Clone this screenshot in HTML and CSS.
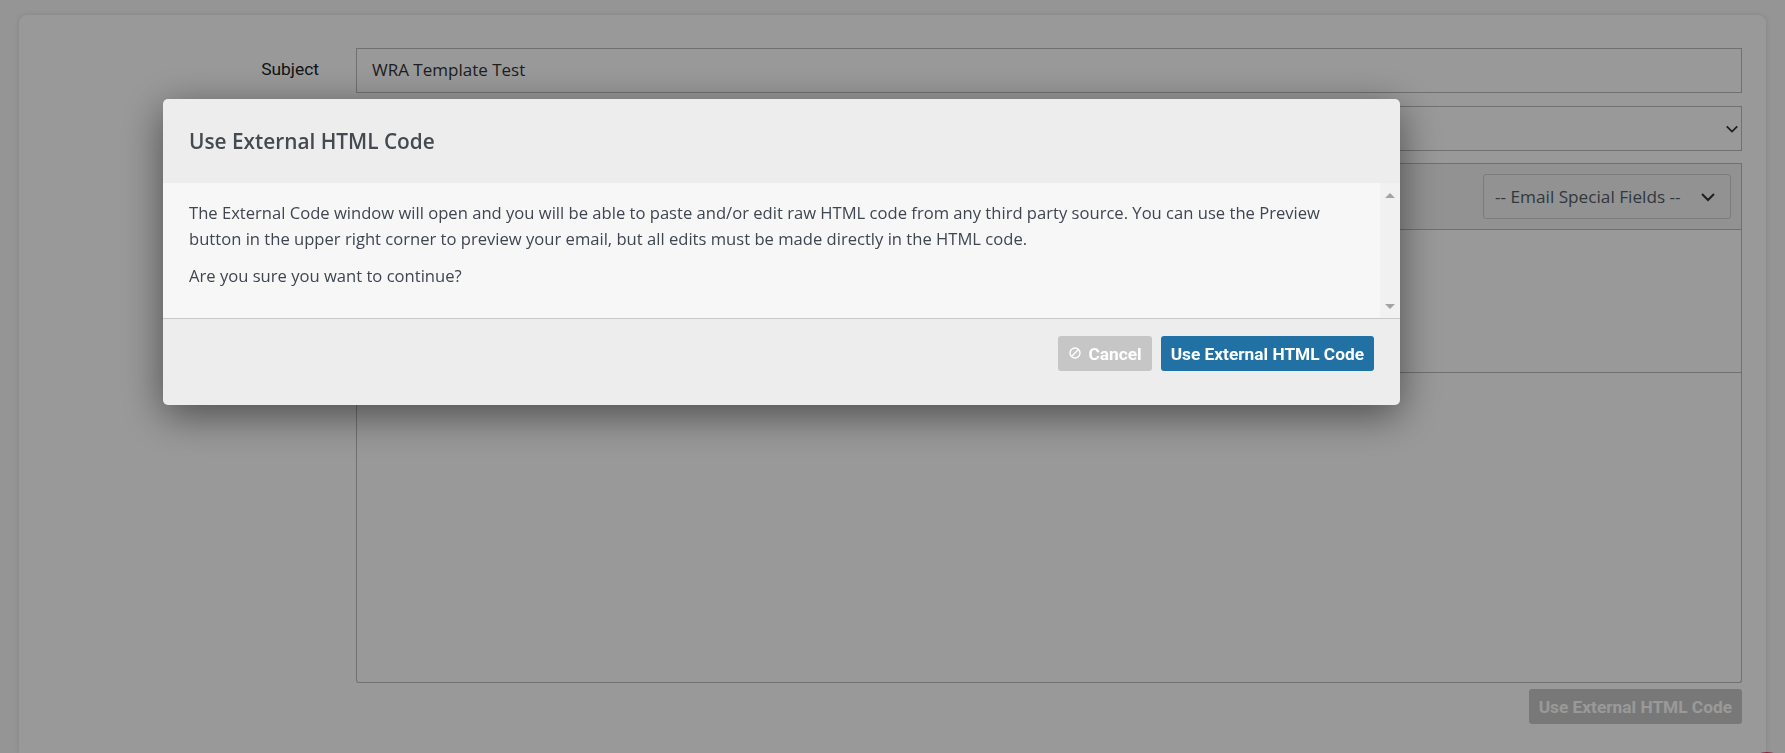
FILE: index.html
```html
<!DOCTYPE html>
<html lang="en">
<head>
    <meta charset="UTF-8">
    <title>Use External HTML Code</title>
    <link rel="stylesheet" href="styles.css">
</head>
<body>
    <!-- Page behind the dialog -->
    <div class="card">
        <div class="form-row form-row-first">
            <label class="form-label">Subject</label>
            <div class="form-input">WRA Template Test</div>
        </div>
        <div class="form-row">
            <span class="form-label"></span>
            <div class="form-select">
                <svg class="chevron chevron-small" viewBox="0 0 16 16"><path d="M2 5l6 6 6-6"/></svg>
            </div>
        </div>
        <div class="form-row">
            <span class="form-label"></span>
            <div class="editor">
                <div class="editor-toolbar">
                    <div class="fields-select">
                        <span>-- Email Special Fields --</span>
                        <svg class="chevron" viewBox="0 0 16 16"><path d="M2 5l6 6 6-6"/></svg>
                    </div>
                </div>
                <div class="editor-top"></div>
                <div class="editor-code"></div>
                <div class="editor-actions">
                    <button class="btn btn-primary" type="button">Use External HTML Code</button>
                </div>
            </div>
        </div>
    </div>
    <div class="corner-dot"></div>

    <!-- Dialog -->
    <div class="backdrop">
        <div class="modal">
            <div class="modal-header">Use External HTML Code</div>
            <div class="modal-body">
                <div class="modal-text">
                    <p>The External Code window will open and you will be able to paste and/or edit raw HTML code from any third party source. You can use the Preview button in the upper right corner to preview your email, but all edits must be made directly in the HTML code.</p>
                    <p>Are you sure you want to continue?</p>
                </div>
                <div class="scroll-rail">
                    <span class="arrow-up"></span>
                    <span class="arrow-down"></span>
                </div>
            </div>
            <div class="modal-footer">
                <button class="btn btn-cancel" type="button">
                    <svg class="cancel-icon" viewBox="0 0 14 14"><circle cx="7" cy="7" r="5"/><path d="M3.6 10.4l6.8-6.8"/></svg>
                    Cancel
                </button>
                <button class="btn btn-primary" type="button">Use External HTML Code</button>
            </div>
        </div>
    </div>
</body>
</html>
```

FILE: styles.css
```css
html, body {
    height: 100%;
}
body {
    margin: 0;
    overflow: hidden;
    background-color: #f8f8f8;
    font-family: "Open Sans", sans-serif;
    color: #444;
}

/* Page behind the dialog */
.card {
    margin: 15px 19px 0;
    height: 738px;
    padding: 33px 24px 0 0;
    background: #fff;
    border-radius: 8px 8px 0 0;
    box-shadow: 0 0 5px rgba(0, 0, 0, 0.12);
    box-sizing: border-box;
}
.form-row {
    display: flex;
    margin-bottom: 12px;
}
.form-row-first {
    margin-bottom: 13px;
}
.form-label {
    width: 300px;
    flex: none;
    padding-top: 11px;
    margin-right: 37px;
    text-align: right;
    font-family: Roboto, sans-serif;
    font-size: 17.4px;
    color: #222;
}
.form-input, .form-select {
    flex: 1;
    height: 45px;
    box-sizing: border-box;
    border: 1px solid #bbb;
    padding: 9px 15px;
    font-size: 17px;
    line-height: 23px;
    color: #333;
}
.form-select {
    display: flex;
    justify-content: flex-end;
    align-items: center;
    padding: 0 2px 0 0;
}
.chevron {
    width: 16px;
    height: 16px;
    fill: none;
    stroke: #333;
    stroke-width: 2;
}
.chevron-small {
    width: 14px;
    height: 14px;
}
.editor {
    flex: 1;
}
.editor-toolbar {
    height: 67px;
    box-sizing: border-box;
    border: 1px solid #bbb;
    background: #f4f4f4;
    display: flex;
    justify-content: flex-end;
    align-items: center;
    padding-right: 10px;
}
.fields-select {
    width: 248px;
    height: 45px;
    box-sizing: border-box;
    border: 1px solid #ccd0d6;
    border-radius: 3px;
    display: flex;
    justify-content: space-between;
    align-items: center;
    padding: 0 14px 0 11px;
    font-size: 17.2px;
    color: #555c68;
}
.editor-top {
    height: 143px;
    box-sizing: border-box;
    border: 1px solid #bbb;
    border-top: none;
}
.editor-code {
    height: 310px;
    box-sizing: border-box;
    border: 1px solid #bbb;
    border-top: none;
    border-radius: 0 0 3px 3px;
}
.editor-actions {
    display: flex;
    justify-content: flex-end;
    margin-top: 6px;
}
.editor-actions .btn-primary {
    background: #c8c8c8;
}
.corner-dot {
    position: fixed;
    right: 6px;
    bottom: -10px;
    width: 24px;
    height: 11px;
    border-radius: 50%;
    background: #e33a6a;
}

/* Dialog */
.backdrop {
    position: fixed;
    top: 0;
    left: 0;
    right: 0;
    bottom: 0;
    background: rgba(0, 0, 0, 0.4);
}
.modal {
    width: 1237px;
    margin: 99px 0 0 163px;
    background: #ededed;
    border-radius: 5px;
    overflow: hidden;
    box-shadow: 0 10px 40px rgba(0, 0, 0, 0.5);
}
.modal-header {
    height: 84px;
    box-sizing: border-box;
    padding: 0 26px;
    display: flex;
    align-items: center;
    font-size: 20.8px;
    font-weight: 600;
    color: #444a50;
}
.modal-body {
    display: flex;
    height: 135px;
    background: #f7f7f7;
}
.modal-text {
    flex: 1;
    padding: 17px 26px 0;
    font-size: 16.6px;
    line-height: 25.5px;
    color: #3f4650;
}
.modal-text p {
    margin: 0 0 12px;
}
.scroll-rail {
    width: 20px;
    background: #f1f1f1;
    display: flex;
    flex-direction: column;
    justify-content: space-between;
    align-items: center;
    padding: 10px 0 9px;
    box-sizing: border-box;
}
.arrow-up, .arrow-down {
    width: 0;
    height: 0;
    border-left: 5px solid transparent;
    border-right: 5px solid transparent;
}
.arrow-up {
    border-bottom: 5px solid #a3a3a3;
}
.arrow-down {
    border-top: 5px solid #a3a3a3;
}
.modal-footer {
    height: 87px;
    box-sizing: border-box;
    border-top: 1px solid #c8c8c8;
    display: flex;
    justify-content: flex-end;
    gap: 9px;
    padding: 17px 26px 0;
}
.btn {
    height: 35px;
    border: none;
    border-radius: 3px;
    padding: 0 10px;
    font-family: Roboto, sans-serif;
    font-size: 17.3px;
    font-weight: 700;
    color: #fff;
}
.btn-primary {
    background: #2271a5;
}
.btn-cancel {
    background: #c6c6c6;
}
.cancel-icon {
    width: 14px;
    height: 14px;
    margin-right: 2px;
    fill: none;
    stroke: #fff;
    stroke-width: 1.4;
}
```
